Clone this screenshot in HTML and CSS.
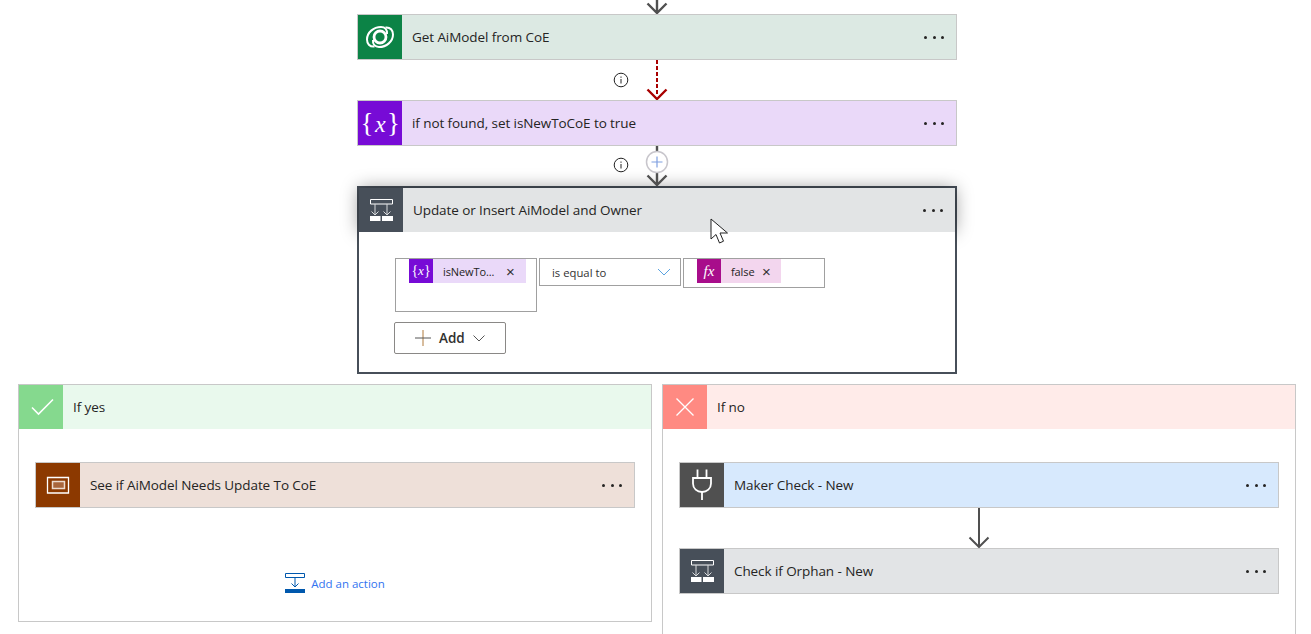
FILE: index.html
```html
<!DOCTYPE html>
<html lang="en">
<head>
<meta charset="utf-8">
<title>Flow</title>
<link rel="stylesheet" href="styles.css">
</head>
<body>
<svg width="0" height="0" class="defs">
  <symbol id="cond" viewBox="0 0 44 44">
    <path d="M11.500 11.500h22v4.500h-22z" fill="none" stroke="#fff" stroke-width="1"/>
    <path d="M16 16v11M12.500 23.500l3.500 3.500 3.500-3.500M28 16v11M24.500 23.500l3.500 3.500 3.500-3.500" fill="none" stroke="#d8dadc" stroke-width="1"/>
    <path d="M11 28h10.500v5H11zM23 28h11v5H23z" fill="#fff"/>
  </symbol>
</svg>
<main class="canvas">
  <div class="connector connector-top">
    <svg class="arrow" width="22" height="14" viewBox="0 0 22 14"><path d="M11 0v12M1.500 3.500l9.500 9.500 9.500-9.500" fill="none" stroke="#505050" stroke-width="2.400"/></svg>
  </div>

  <div class="card card-green">
    <div class="card-icon icon-green">
      <svg width="44" height="44" viewBox="0 0 44 44"><g fill="none" stroke="#fff"><path id="swoosh" stroke-width="2" d="M16.500 31.500C11.500 32 9 28.500 9 24.500 9 17.500 15.500 12 23 12c4 0 6.500 2.500 6 7"/><path stroke-width="2" d="M27.500 12.500C32.500 12 35 15.500 35 19.500 35 26.500 28.500 32 21 32c-4 0-6.500-2.500-6-7"/><circle cx="22" cy="22" r="6" stroke-width="2.800"/></g></svg>
    </div>
    <span class="card-title">Get AiModel from CoE</span>
    <span class="dots"><i></i><i></i><i></i></span>
  </div>

  <div class="connector">
    <svg class="info" width="16" height="16" viewBox="0 0 16 16"><circle cx="8" cy="8" r="6.800" fill="#fff" stroke="#222" stroke-width="1"/><path d="M8 7v4.500M8 4.500v1.300" stroke="#222" stroke-width="1"/></svg>
    <svg class="arrow" width="22" height="40" viewBox="0 0 22 40"><path d="M11 0v34" stroke="#a80000" stroke-width="2" stroke-dasharray="4 2" fill="none"/><path d="M1.500 29.500l9.500 9.500 9.500-9.500" fill="none" stroke="#a80000" stroke-width="2.400"/></svg>
  </div>

  <div class="card card-purple">
    <div class="card-icon icon-purple">
      <span class="braces">{<em>x</em>}</span>
    </div>
    <span class="card-title">if not found, set isNewToCoE to true</span>
    <span class="dots"><i></i><i></i><i></i></span>
  </div>

  <div class="connector connector-plus">
    <svg class="info" width="16" height="16" viewBox="0 0 16 16"><circle cx="8" cy="8" r="6.800" fill="#fff" stroke="#222" stroke-width="1"/><path d="M8 7v4.500M8 4.500v1.300" stroke="#222" stroke-width="1"/></svg>
    <svg class="arrow" width="22" height="40" viewBox="0 0 22 40"><path d="M11 0v38M1.500 29.500l9.500 9.500 9.500-9.500" fill="none" stroke="#505050" stroke-width="2.400"/></svg>
    <svg class="plus" width="24" height="24" viewBox="0 0 24 24"><circle cx="12" cy="12" r="10.500" fill="#fff" stroke="#c8c6cc" stroke-width="1.500"/><path d="M12 6.500v11M6.500 12h11" stroke="#7f9fe0" stroke-width="1.200"/></svg>
  </div>

  <section class="condition">
    <header class="condition-head">
      <div class="card-icon icon-slate"><svg width="44" height="44"><use href="#cond"/></svg></div>
      <span class="card-title">Update or Insert AiModel and Owner</span>
      <span class="dots"><i></i><i></i><i></i></span>
    </header>
    <div class="condition-body">
      <div class="rule">
        <div class="field field-left">
          <span class="token token-purple"><span class="token-icon token-icon-purple">{<em>x</em>}</span><span class="token-name">isNewTo...</span><span class="token-x">×</span></span>
        </div>
        <div class="select"><span>is equal to</span>
          <svg width="14" height="8" viewBox="0 0 14 8"><path d="M1 1l6 6 6-6" fill="none" stroke="#5ba3e0" stroke-width="1"/></svg>
        </div>
        <div class="field field-right">
          <span class="token token-pink"><span class="token-icon token-icon-pink"><em>fx</em></span><span class="token-name token-name-false">false</span><span class="token-x">×</span></span>
        </div>
      </div>
      <button class="add" type="button">
        <svg width="16" height="16" viewBox="0 0 16 16"><path d="M8 0v16" stroke="#b07a3c" stroke-width="1"/><path d="M0 8h16" stroke="#555" stroke-width="1"/></svg>
        <span>Add</span>
        <svg width="12" height="7" viewBox="0 0 12 7"><path d="M.5.500l5.500 5.500 5.500-5.500" fill="none" stroke="#555" stroke-width="1"/></svg>
      </button>
    </div>
  </section>

  <div class="branches">
    <section class="branch branch-yes">
      <header class="branch-head head-yes">
        <div class="branch-icon icon-yes"><svg width="44" height="44" viewBox="0 0 44 44"><path d="M13 22.500l6.500 6.500L34 14.500" fill="none" stroke="#fff" stroke-width="1.600"/></svg></div>
        <span class="card-title">If yes</span>
      </header>
      <div class="branch-body">
        <div class="card card-brown">
          <div class="card-icon icon-brown">
            <svg width="44" height="44" viewBox="0 0 44 44"><path d="M11.500 14.500h21v15.500h-21z" fill="none" stroke="#fff" stroke-width="1.300"/><path d="M16.500 18.500h12v7h-12z" fill="#a8663c" stroke="#ecdccf" stroke-width="1.500"/></svg>
          </div>
          <span class="card-title">See if AiModel Needs Update To CoE</span>
          <span class="dots"><i></i><i></i><i></i></span>
        </div>
        <a class="add-action" href="#">
          <svg width="20" height="20" viewBox="0 0 20 20"><path d="M.5.500h19v4H.5zM10 5v9M6.500 10.500L10 14l3.500-3.500" fill="none" stroke="#0058ad" stroke-width="1"/><path d="M0 16h20v4H0z" fill="#0058ad"/></svg>
          <span>Add an action</span>
        </a>
      </div>
    </section>

    <section class="branch branch-no">
      <header class="branch-head head-no">
        <div class="branch-icon icon-no"><svg width="44" height="44" viewBox="0 0 44 44"><path d="M13.500 13.500l17 17M30.500 13.500l-17 17" fill="none" stroke="#fff" stroke-width="1.300"/></svg></div>
        <span class="card-title">If no</span>
      </header>
      <div class="branch-body branch-body-no">
        <div class="card card-blue">
          <div class="card-icon icon-dark">
            <svg width="44" height="44" viewBox="0 0 44 44"><path d="M17.500 6.500v8M26.500 6.500v8" stroke="#fff" stroke-width="1.800" fill="none"/><path d="M13 15h18v5.500c0 5-4 8.500-9 8.500s-9-3.500-9-8.500z" fill="none" stroke="#fff" stroke-width="1.800"/><path d="M22 29v8" stroke="#fff" stroke-width="1.800"/></svg>
          </div>
          <span class="card-title">Maker Check - New</span>
          <span class="dots"><i></i><i></i><i></i></span>
        </div>
        <div class="connector connector-plain">
          <svg class="arrow" width="22" height="40" viewBox="0 0 22 40"><path d="M11 0v38M1.500 29.500l9.500 9.500 9.500-9.500" fill="none" stroke="#505050" stroke-width="2"/></svg>
        </div>
        <div class="card card-grey">
          <div class="card-icon icon-slate"><svg width="44" height="44"><use href="#cond"/></svg></div>
          <span class="card-title">Check if Orphan - New</span>
          <span class="dots"><i></i><i></i><i></i></span>
        </div>
      </div>
    </section>
  </div>
</main>
<svg class="cursor" width="20" height="28" viewBox="0 0 20 28"><path d="M1 1v20l5-4.500 3.500 8.500 4-1.800L10 15h7.500z" fill="#fff" stroke="#222" stroke-width="1"/></svg>
</body>
</html>
```
FILE: styles.css
```css
* { box-sizing: border-box; }
html, body { margin: 0; padding: 0; height: 634px; overflow: hidden; background: #fff; }
body { position: relative; font-family: "Open Sans", "Liberation Sans", sans-serif; color: #252423; }
.defs { position: absolute; }

.canvas { width: 1314px; display: flex; flex-direction: column; align-items: center; }

.connector { position: relative; width: 600px; height: 40px; flex: none; display: flex; justify-content: center; z-index: 3; }
.connector-top { height: 14px; }
.arrow { display: block; }
.info { position: absolute; left: 256px; top: 12px; }
.connector-plus .info { top: 11px; }
.plus { position: absolute; left: 288px; top: 4px; }

.card { width: 600px; height: 46px; flex: none; display: flex; align-items: center; border: 1px solid #c8c8c8; }
.card-icon { width: 44px; height: 44px; flex: none; display: flex; align-items: center; justify-content: center; }
.card-icon svg { display: block; }
.card-title { margin-left: 10px; font-size: 13.500px; line-height: 18px; letter-spacing: -0.08px; color: #252423; }
.dots { margin-left: auto; margin-right: 12px; width: 20px; display: flex; justify-content: space-between; }
.dots i { width: 3px; height: 3px; border-radius: 50%; background: #252423; }

.card-green { background: #dce9e3; }
.icon-green { background: #0c8346; }
.card-purple { background: #ead9f9; }
.icon-purple { background: #770bd6; }
.card-brown { background: #eee0d9; }
.icon-brown { background: #8c3900; }
.card-blue { background: #d7e9fd; }
.icon-dark { background: #505050; }
.card-grey { background: #e2e4e6; }
.icon-slate { background: #474f59; }

.braces { color: #fff; font-family: "Liberation Serif", serif; font-size: 27px; line-height: 1; letter-spacing: -0.5px; }
.braces em { font-family: "Liberation Serif", serif; font-size: 24px; margin: 0 2px; }

.condition { width: 600px; height: 188px; flex: none; border: 2px solid #474f59; background: #fff; position: relative; z-index: 2; }
.condition-head { height: 44px; display: flex; align-items: center; background: #e2e4e5; box-shadow: 0 0 18px rgba(0, 0, 0, .4); }
.condition-body { position: relative; height: 140px; background: #fff; padding: 26px 0 0 35px; }
.rule { display: flex; align-items: flex-start; gap: 2px; margin-left: 1px; }
.field { width: 142px; border: 1px solid #a0a0a0; padding-left: 13px; background: #fff; }
.field-left { height: 54px; }
.field-right { height: 30px; }
.select { width: 142px; height: 28px; border: 1px solid #a0a0a0; display: flex; align-items: center; justify-content: space-between; padding: 0 9px 0 12px; font-size: 11.300px; color: #333; }

.token { display: flex; align-items: center; height: 24px; font-size: 11px; color: #252423; }
.token-purple { width: 117px; background: #ead9f9; }
.token-pink { width: 84px; background: #f3d6ee; }
.token-icon { width: 24px; height: 24px; flex: none; display: flex; align-items: center; justify-content: center; color: #fff; font-family: "Liberation Serif", serif; font-size: 14px; }
.token-icon em { font-size: 13px; }
.token-icon-purple { background: #770bd6; }
.token-icon-pink { background: #a80d8b; }
.token-icon-pink em { font-size: 15px; }
.token-name { margin-left: 10px; width: 63px; letter-spacing: -0.1px; }
.token-name-false { width: 31px; }
.token-x { font-size: 15px; line-height: 1; font-family: "Liberation Sans", sans-serif; color: #333; }

.add { margin-top: 10px; width: 112px; height: 32px; display: flex; align-items: center; gap: 8px; padding: 0 0 0 20px; border: 1px solid #8a8886; border-radius: 2px; background: #fff; font-family: "Open Sans", sans-serif; font-weight: 600; font-size: 13.500px; color: #323130; }

.branches { display: flex; align-items: flex-start; gap: 10px; margin-top: 10px; flex: none; }
.branch { width: 634px; border: 1px solid #c8c8c8; background: #fff; flex: none; }
.branch-yes { height: 238px; }
.branch-no { height: 250px; border-bottom: 0; }
.branch-head { height: 44px; display: flex; align-items: center; }
.branch-icon { width: 44px; height: 44px; flex: none; }
.branch-icon svg { display: block; }
.head-yes { background: #e9f9ed; }
.icon-yes { background: #85d98e; }
.head-no { background: #ffebe9; }
.icon-no { background: #ff8a82; }
.branch-body { padding: 33px 16px 0; display: flex; flex-direction: column; }
.connector-plain { z-index: 0; }
.add-action { align-self: center; margin-top: 65px; display: flex; align-items: center; gap: 6px; font-size: 11.500px; color: #3273f0; text-decoration: none; }
.add-action svg { display: block; }

.cursor { position: absolute; left: 710px; top: 218px; z-index: 5; }
```
